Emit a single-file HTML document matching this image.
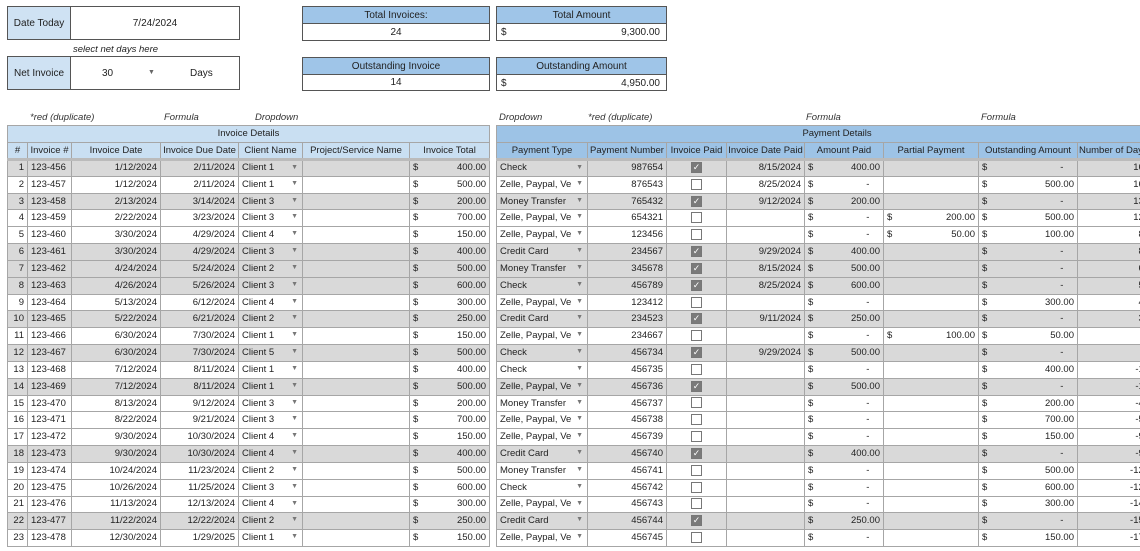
<!DOCTYPE html>
<html><head><meta charset="utf-8"><style>
body{margin:0;width:1140px;height:551px;overflow:hidden;background:#fff;font-family:"Liberation Sans",sans-serif;font-size:10px;color:#222;position:relative}
.a{position:absolute}
.box{position:absolute;border:1px solid #555;box-sizing:border-box;background:#fff}
.lb{background:#cfe2f3}
.db{background:#9fc5e8}
.c{display:flex;align-items:center;justify-content:center}
.note{position:absolute;top:112px;font-style:italic;font-size:9.5px;color:#333}
table{position:absolute;border-collapse:collapse;table-layout:fixed}
td{border:1px solid #a6a6a6;height:16.83px;padding:0 3px;white-space:nowrap;overflow:hidden;font-size:9.5px;line-height:14px;box-sizing:border-box;position:relative}
tr.h td{text-align:center;height:17px;padding:0 1px}
tr.g td{background:#d9d9d9}
.r{text-align:right}
.m i{float:left;font-style:normal}
.m{text-align:right}
b{position:absolute;right:4px;top:0;font-weight:normal;font-size:7px;color:#777;background:inherit;padding-left:2px}
.cb{text-align:center}
.cb span{display:inline-block;width:11px;height:11px;border:1px solid #777;background:#fff;vertical-align:middle;box-sizing:border-box}
.cb span.y{background:#7a7a7a;color:#fff;font-size:9px;line-height:9px}
.k td{border-top:3px solid #bbb}
</style></head><body>
<div class="box" style="left:7px;top:6px;width:233px;height:34px"></div>
<div class="a lb c" style="left:8px;top:7px;width:62px;height:32px;border-right:1px solid #555">Date Today</div>
<div class="a c" style="left:71px;top:7px;width:168px;height:32px">7/24/2024</div>
<div class="a" style="left:73px;top:44px;font-style:italic;font-size:9.5px">select net days here</div>
<div class="box" style="left:7px;top:56px;width:233px;height:34px"></div>
<div class="a lb c" style="left:8px;top:57px;width:62px;height:32px;border-right:1px solid #555">Net Invoice</div>
<div class="a" style="left:102px;top:68px">30</div>
<div class="a" style="left:148px;top:69px;font-size:7px;color:#666">▼</div>
<div class="a" style="left:190px;top:68px">Days</div>

<div class="box" style="left:302px;top:6px;width:188px;height:35px"></div>
<div class="a db c" style="left:303px;top:7px;width:186px;height:16px;border-bottom:1px solid #555">Total Invoices:</div>
<div class="a c" style="left:303px;top:24px;width:186px;height:16px">24</div>
<div class="box" style="left:496px;top:6px;width:171px;height:35px"></div>
<div class="a db c" style="left:497px;top:7px;width:169px;height:16px;border-bottom:1px solid #555">Total Amount</div>
<div class="a" style="left:501px;top:27px">$</div><div class="a" style="right:480px;top:27px">9,300.00</div>

<div class="box" style="left:302px;top:57px;width:188px;height:34px"></div>
<div class="a db c" style="left:303px;top:58px;width:186px;height:16px;border-bottom:1px solid #555">Outstanding Invoice</div>
<div class="a c" style="left:303px;top:75px;width:186px;height:15px">14</div>
<div class="box" style="left:496px;top:57px;width:171px;height:34px"></div>
<div class="a db c" style="left:497px;top:58px;width:169px;height:16px;border-bottom:1px solid #555">Outstanding Amount</div>
<div class="a" style="left:501px;top:78px">$</div><div class="a" style="right:480px;top:78px">4,950.00</div>

<div class="note" style="left:30px">*red (duplicate)</div>
<div class="note" style="left:164px">Formula</div>
<div class="note" style="left:255px">Dropdown</div>
<div class="note" style="left:499px">Dropdown</div>
<div class="note" style="left:588px">*red (duplicate)</div>
<div class="note" style="left:806px">Formula</div>
<div class="note" style="left:981px">Formula</div>

<table style="left:7px;top:125px;width:482px">
<colgroup><col style="width:20px"><col style="width:44px"><col style="width:89px"><col style="width:78px"><col style="width:64px"><col style="width:107px"><col style="width:80px"></colgroup>
<tr class="h"><td colspan="7" style="background:#c9dff2">Invoice Details</td></tr>
<tr class="h" style="background:#c9dff2"><td>#</td><td>Invoice #</td><td>Invoice Date</td><td>Invoice Due Date</td><td>Client Name</td><td>Project/Service Name</td><td>Invoice Total</td></tr>
<tr class="g k"><td class="r">1</td><td>123-456</td><td class="r">1/12/2024</td><td class="r">2/11/2024</td><td>Client 1<b>▼</b></td><td></td><td class="m"><i>$</i>400.00</td></tr>
<tr><td class="r">2</td><td>123-457</td><td class="r">1/12/2024</td><td class="r">2/11/2024</td><td>Client 1<b>▼</b></td><td></td><td class="m"><i>$</i>500.00</td></tr>
<tr class="g"><td class="r">3</td><td>123-458</td><td class="r">2/13/2024</td><td class="r">3/14/2024</td><td>Client 3<b>▼</b></td><td></td><td class="m"><i>$</i>200.00</td></tr>
<tr><td class="r">4</td><td>123-459</td><td class="r">2/22/2024</td><td class="r">3/23/2024</td><td>Client 3<b>▼</b></td><td></td><td class="m"><i>$</i>700.00</td></tr>
<tr><td class="r">5</td><td>123-460</td><td class="r">3/30/2024</td><td class="r">4/29/2024</td><td>Client 4<b>▼</b></td><td></td><td class="m"><i>$</i>150.00</td></tr>
<tr class="g"><td class="r">6</td><td>123-461</td><td class="r">3/30/2024</td><td class="r">4/29/2024</td><td>Client 3<b>▼</b></td><td></td><td class="m"><i>$</i>400.00</td></tr>
<tr class="g"><td class="r">7</td><td>123-462</td><td class="r">4/24/2024</td><td class="r">5/24/2024</td><td>Client 2<b>▼</b></td><td></td><td class="m"><i>$</i>500.00</td></tr>
<tr class="g"><td class="r">8</td><td>123-463</td><td class="r">4/26/2024</td><td class="r">5/26/2024</td><td>Client 3<b>▼</b></td><td></td><td class="m"><i>$</i>600.00</td></tr>
<tr><td class="r">9</td><td>123-464</td><td class="r">5/13/2024</td><td class="r">6/12/2024</td><td>Client 4<b>▼</b></td><td></td><td class="m"><i>$</i>300.00</td></tr>
<tr class="g"><td class="r">10</td><td>123-465</td><td class="r">5/22/2024</td><td class="r">6/21/2024</td><td>Client 2<b>▼</b></td><td></td><td class="m"><i>$</i>250.00</td></tr>
<tr><td class="r">11</td><td>123-466</td><td class="r">6/30/2024</td><td class="r">7/30/2024</td><td>Client 1<b>▼</b></td><td></td><td class="m"><i>$</i>150.00</td></tr>
<tr class="g"><td class="r">12</td><td>123-467</td><td class="r">6/30/2024</td><td class="r">7/30/2024</td><td>Client 5<b>▼</b></td><td></td><td class="m"><i>$</i>500.00</td></tr>
<tr><td class="r">13</td><td>123-468</td><td class="r">7/12/2024</td><td class="r">8/11/2024</td><td>Client 1<b>▼</b></td><td></td><td class="m"><i>$</i>400.00</td></tr>
<tr class="g"><td class="r">14</td><td>123-469</td><td class="r">7/12/2024</td><td class="r">8/11/2024</td><td>Client 1<b>▼</b></td><td></td><td class="m"><i>$</i>500.00</td></tr>
<tr><td class="r">15</td><td>123-470</td><td class="r">8/13/2024</td><td class="r">9/12/2024</td><td>Client 3<b>▼</b></td><td></td><td class="m"><i>$</i>200.00</td></tr>
<tr><td class="r">16</td><td>123-471</td><td class="r">8/22/2024</td><td class="r">9/21/2024</td><td>Client 3<b>▼</b></td><td></td><td class="m"><i>$</i>700.00</td></tr>
<tr><td class="r">17</td><td>123-472</td><td class="r">9/30/2024</td><td class="r">10/30/2024</td><td>Client 4<b>▼</b></td><td></td><td class="m"><i>$</i>150.00</td></tr>
<tr class="g"><td class="r">18</td><td>123-473</td><td class="r">9/30/2024</td><td class="r">10/30/2024</td><td>Client 4<b>▼</b></td><td></td><td class="m"><i>$</i>400.00</td></tr>
<tr><td class="r">19</td><td>123-474</td><td class="r">10/24/2024</td><td class="r">11/23/2024</td><td>Client 2<b>▼</b></td><td></td><td class="m"><i>$</i>500.00</td></tr>
<tr><td class="r">20</td><td>123-475</td><td class="r">10/26/2024</td><td class="r">11/25/2024</td><td>Client 3<b>▼</b></td><td></td><td class="m"><i>$</i>600.00</td></tr>
<tr><td class="r">21</td><td>123-476</td><td class="r">11/13/2024</td><td class="r">12/13/2024</td><td>Client 4<b>▼</b></td><td></td><td class="m"><i>$</i>300.00</td></tr>
<tr class="g"><td class="r">22</td><td>123-477</td><td class="r">11/22/2024</td><td class="r">12/22/2024</td><td>Client 2<b>▼</b></td><td></td><td class="m"><i>$</i>250.00</td></tr>
<tr><td class="r">23</td><td>123-478</td><td class="r">12/30/2024</td><td class="r">1/29/2025</td><td>Client 1<b>▼</b></td><td></td><td class="m"><i>$</i>150.00</td></tr>
</table>

<table style="left:496px;top:125px;width:681px">
<colgroup><col style="width:91px"><col style="width:79px"><col style="width:60px"><col style="width:78px"><col style="width:79px"><col style="width:95px"><col style="width:99px"><col style="width:100px"></colgroup>
<tr class="h"><td colspan="8" style="background:#9dc3e6">Payment Details</td></tr>
<tr class="h" style="background:#9dc3e6"><td>Payment Type</td><td>Payment Number</td><td>Invoice Paid</td><td>Invoice Date Paid</td><td>Amount Paid</td><td>Partial Payment</td><td>Outstanding Amount</td><td style="text-align:left">Number of Days</td></tr>
<tr class="g k"><td>Check<b>▼</b></td><td class="r">987654</td><td class="cb"><span class="y">✓</span></td><td class="r">8/15/2024</td><td class="m"><i>$</i>400.00</td><td></td><td class="m"><i>$</i>-&nbsp;&nbsp;&nbsp;&nbsp;</td><td class="r" style="padding-right:28px">164</td></tr>
<tr><td>Zelle, Paypal, Ve<b>▼</b></td><td class="r">876543</td><td class="cb"><span></span></td><td class="r">8/25/2024</td><td class="m"><i>$</i>-&nbsp;&nbsp;&nbsp;&nbsp;</td><td></td><td class="m"><i>$</i>500.00</td><td class="r" style="padding-right:28px">164</td></tr>
<tr class="g"><td>Money Transfer<b>▼</b></td><td class="r">765432</td><td class="cb"><span class="y">✓</span></td><td class="r">9/12/2024</td><td class="m"><i>$</i>200.00</td><td></td><td class="m"><i>$</i>-&nbsp;&nbsp;&nbsp;&nbsp;</td><td class="r" style="padding-right:28px">132</td></tr>
<tr><td>Zelle, Paypal, Ve<b>▼</b></td><td class="r">654321</td><td class="cb"><span></span></td><td></td><td class="m"><i>$</i>-&nbsp;&nbsp;&nbsp;&nbsp;</td><td class="m"><i>$</i>200.00</td><td class="m"><i>$</i>500.00</td><td class="r" style="padding-right:28px">123</td></tr>
<tr><td>Zelle, Paypal, Ve<b>▼</b></td><td class="r">123456</td><td class="cb"><span></span></td><td></td><td class="m"><i>$</i>-&nbsp;&nbsp;&nbsp;&nbsp;</td><td class="m"><i>$</i>50.00</td><td class="m"><i>$</i>100.00</td><td class="r" style="padding-right:28px">86</td></tr>
<tr class="g"><td>Credit Card<b>▼</b></td><td class="r">234567</td><td class="cb"><span class="y">✓</span></td><td class="r">9/29/2024</td><td class="m"><i>$</i>400.00</td><td></td><td class="m"><i>$</i>-&nbsp;&nbsp;&nbsp;&nbsp;</td><td class="r" style="padding-right:28px">86</td></tr>
<tr class="g"><td>Money Transfer<b>▼</b></td><td class="r">345678</td><td class="cb"><span class="y">✓</span></td><td class="r">8/15/2024</td><td class="m"><i>$</i>500.00</td><td></td><td class="m"><i>$</i>-&nbsp;&nbsp;&nbsp;&nbsp;</td><td class="r" style="padding-right:28px">61</td></tr>
<tr class="g"><td>Check<b>▼</b></td><td class="r">456789</td><td class="cb"><span class="y">✓</span></td><td class="r">8/25/2024</td><td class="m"><i>$</i>600.00</td><td></td><td class="m"><i>$</i>-&nbsp;&nbsp;&nbsp;&nbsp;</td><td class="r" style="padding-right:28px">59</td></tr>
<tr><td>Zelle, Paypal, Ve<b>▼</b></td><td class="r">123412</td><td class="cb"><span></span></td><td></td><td class="m"><i>$</i>-&nbsp;&nbsp;&nbsp;&nbsp;</td><td></td><td class="m"><i>$</i>300.00</td><td class="r" style="padding-right:28px">42</td></tr>
<tr class="g"><td>Credit Card<b>▼</b></td><td class="r">234523</td><td class="cb"><span class="y">✓</span></td><td class="r">9/11/2024</td><td class="m"><i>$</i>250.00</td><td></td><td class="m"><i>$</i>-&nbsp;&nbsp;&nbsp;&nbsp;</td><td class="r" style="padding-right:28px">33</td></tr>
<tr><td>Zelle, Paypal, Ve<b>▼</b></td><td class="r">234667</td><td class="cb"><span></span></td><td></td><td class="m"><i>$</i>-&nbsp;&nbsp;&nbsp;&nbsp;</td><td class="m"><i>$</i>100.00</td><td class="m"><i>$</i>50.00</td><td class="r" style="padding-right:28px">-6</td></tr>
<tr class="g"><td>Check<b>▼</b></td><td class="r">456734</td><td class="cb"><span class="y">✓</span></td><td class="r">9/29/2024</td><td class="m"><i>$</i>500.00</td><td></td><td class="m"><i>$</i>-&nbsp;&nbsp;&nbsp;&nbsp;</td><td class="r" style="padding-right:28px">-6</td></tr>
<tr><td>Check<b>▼</b></td><td class="r">456735</td><td class="cb"><span></span></td><td></td><td class="m"><i>$</i>-&nbsp;&nbsp;&nbsp;&nbsp;</td><td></td><td class="m"><i>$</i>400.00</td><td class="r" style="padding-right:28px">-18</td></tr>
<tr class="g"><td>Zelle, Paypal, Ve<b>▼</b></td><td class="r">456736</td><td class="cb"><span class="y">✓</span></td><td></td><td class="m"><i>$</i>500.00</td><td></td><td class="m"><i>$</i>-&nbsp;&nbsp;&nbsp;&nbsp;</td><td class="r" style="padding-right:28px">-18</td></tr>
<tr><td>Money Transfer<b>▼</b></td><td class="r">456737</td><td class="cb"><span></span></td><td></td><td class="m"><i>$</i>-&nbsp;&nbsp;&nbsp;&nbsp;</td><td></td><td class="m"><i>$</i>200.00</td><td class="r" style="padding-right:28px">-41</td></tr>
<tr><td>Zelle, Paypal, Ve<b>▼</b></td><td class="r">456738</td><td class="cb"><span></span></td><td></td><td class="m"><i>$</i>-&nbsp;&nbsp;&nbsp;&nbsp;</td><td></td><td class="m"><i>$</i>700.00</td><td class="r" style="padding-right:28px">-59</td></tr>
<tr><td>Zelle, Paypal, Ve<b>▼</b></td><td class="r">456739</td><td class="cb"><span></span></td><td></td><td class="m"><i>$</i>-&nbsp;&nbsp;&nbsp;&nbsp;</td><td></td><td class="m"><i>$</i>150.00</td><td class="r" style="padding-right:28px">-98</td></tr>
<tr class="g"><td>Credit Card<b>▼</b></td><td class="r">456740</td><td class="cb"><span class="y">✓</span></td><td></td><td class="m"><i>$</i>400.00</td><td></td><td class="m"><i>$</i>-&nbsp;&nbsp;&nbsp;&nbsp;</td><td class="r" style="padding-right:28px">-98</td></tr>
<tr><td>Money Transfer<b>▼</b></td><td class="r">456741</td><td class="cb"><span></span></td><td></td><td class="m"><i>$</i>-&nbsp;&nbsp;&nbsp;&nbsp;</td><td></td><td class="m"><i>$</i>500.00</td><td class="r" style="padding-right:28px">-122</td></tr>
<tr><td>Check<b>▼</b></td><td class="r">456742</td><td class="cb"><span></span></td><td></td><td class="m"><i>$</i>-&nbsp;&nbsp;&nbsp;&nbsp;</td><td></td><td class="m"><i>$</i>600.00</td><td class="r" style="padding-right:28px">-124</td></tr>
<tr><td>Zelle, Paypal, Ve<b>▼</b></td><td class="r">456743</td><td class="cb"><span></span></td><td></td><td class="m"><i>$</i>-&nbsp;&nbsp;&nbsp;&nbsp;</td><td></td><td class="m"><i>$</i>300.00</td><td class="r" style="padding-right:28px">-142</td></tr>
<tr class="g"><td>Credit Card<b>▼</b></td><td class="r">456744</td><td class="cb"><span class="y">✓</span></td><td></td><td class="m"><i>$</i>250.00</td><td></td><td class="m"><i>$</i>-&nbsp;&nbsp;&nbsp;&nbsp;</td><td class="r" style="padding-right:28px">-151</td></tr>
<tr><td>Zelle, Paypal, Ve<b>▼</b></td><td class="r">456745</td><td class="cb"><span></span></td><td></td><td class="m"><i>$</i>-&nbsp;&nbsp;&nbsp;&nbsp;</td><td></td><td class="m"><i>$</i>150.00</td><td class="r" style="padding-right:28px">-171</td></tr>
</table>
</body></html>
